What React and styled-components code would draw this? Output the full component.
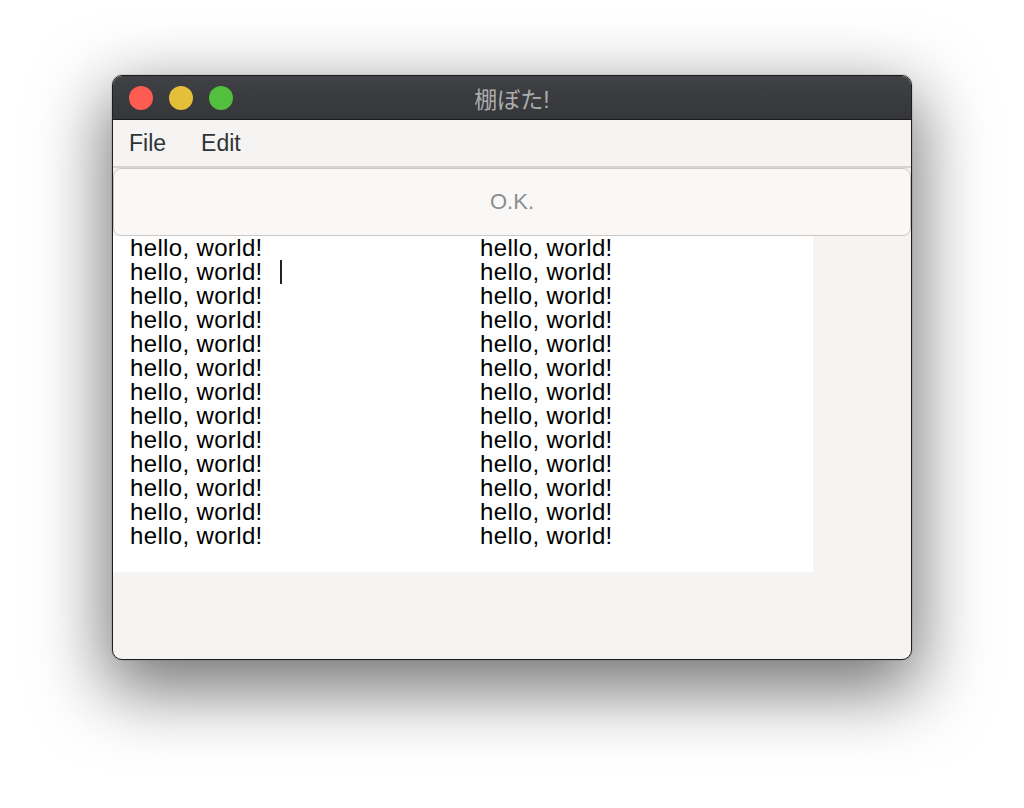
import styled, { createGlobalStyle } from 'styled-components';

// Estilos globais da página
const GlobalStyle = createGlobalStyle`
  html, body {
    margin: 0;
    padding: 0;
    background: #ffffff;
  }
  body {
    width: 1024px;
    height: 808px;
    overflow: hidden;
    font-family: "Liberation Sans", "Noto Sans CJK JP", sans-serif;
  }
`;

const Page = styled.div`
  display: flex;
  justify-content: center;
  padding-top: 75px;
`;

// Janela principal
const Window = styled.div`
  width: 800px;
  height: 585px;
  box-sizing: border-box;
  border: 1px solid #1d1d1f;
  border-radius: 10px;
  overflow: hidden;
  display: flex;
  flex-direction: column;
  background: #f5f4f2;
  box-shadow: 0 24px 70px 6px rgba(0, 0, 0, 0.55), 0 0 0 1px rgba(0, 0, 0, 0.08);
`;

const TitleBar = styled.div`
  height: 43px;
  flex-shrink: 0;
  display: grid;
  grid-template-columns: 1fr auto 1fr;
  align-items: center;
  background: linear-gradient(#404144, #353639);
  border-bottom: 1px solid #1b1b1c;
`;

const Lights = styled.div`
  display: flex;
  gap: 16px;
  padding-left: 16px;
`;

const Light = styled.span`
  width: 24px;
  height: 24px;
  border-radius: 50%;
  background: ${(p) => p.color};
`;

const Title = styled.div`
  font-size: 23px;
  color: #acacac;
  font-family: "Liberation Sans", "Noto Sans CJK JP", sans-serif;
`;

const MenuBar = styled.div`
  height: 46px;
  flex-shrink: 0;
  display: flex;
  align-items: center;
  gap: 35px;
  padding-left: 16px;
  border-bottom: 2px solid #d7d3cf;
`;

const MenuItem = styled.span`
  font-size: 23px;
  color: #2e3436;
`;

const OkButton = styled.button`
  margin: 0;
  height: 68px;
  flex-shrink: 0;
  border: 1px solid #cdc8c3;
  border-radius: 8px;
  background: #f9f8f7;
  font-family: "Liberation Sans", sans-serif;
  font-size: 22px;
  color: #8b8e8f;
`;

const Content = styled.div`
  display: flex;
  flex: 1;
`;

const TextArea = styled.div`
  width: 700px;
  height: 336px;
  background: #ffffff;
  display: grid;
  grid-template-columns: 350px 350px;
  align-content: start;
`;

const Column = styled.div`
  padding-left: 17px;
  display: flex;
  flex-direction: column;
`;

const Line = styled.div`
  font-size: 24px;
  line-height: 24px;
  letter-spacing: 0.35px;
  color: #000;
  white-space: pre;
  display: flex;
  align-items: center;
`;

const Caret = styled.span`
  display: inline-block;
  width: 2px;
  height: 24px;
  margin-left: 17px;
  background: #222;
`;

const linhas = Array.from({ length: 13 }, (_, i) => i);

const App = () => {
  return (
    <>
      <GlobalStyle />
      <Page>
        <Window>
          <TitleBar>
            <Lights>
              <Light color="#fe5b51" />
              <Light color="#e5be3a" />
              <Light color="#52c03d" />
            </Lights>
            <Title>棚ぼた!</Title>
            <div />
          </TitleBar>
          <MenuBar>
            <MenuItem>File</MenuItem>
            <MenuItem>Edit</MenuItem>
          </MenuBar>
          <OkButton>O.K.</OkButton>
          <Content>
            <TextArea>
              <Column>
                {linhas.map((i) => (
                  <Line key={i}>
                    hello, world!
                    {i === 1 && <Caret />}
                  </Line>
                ))}
              </Column>
              <Column>
                {linhas.map((i) => (
                  <Line key={i}>hello, world!</Line>
                ))}
              </Column>
            </TextArea>
          </Content>
        </Window>
      </Page>
    </>
  );
};

export default App;
